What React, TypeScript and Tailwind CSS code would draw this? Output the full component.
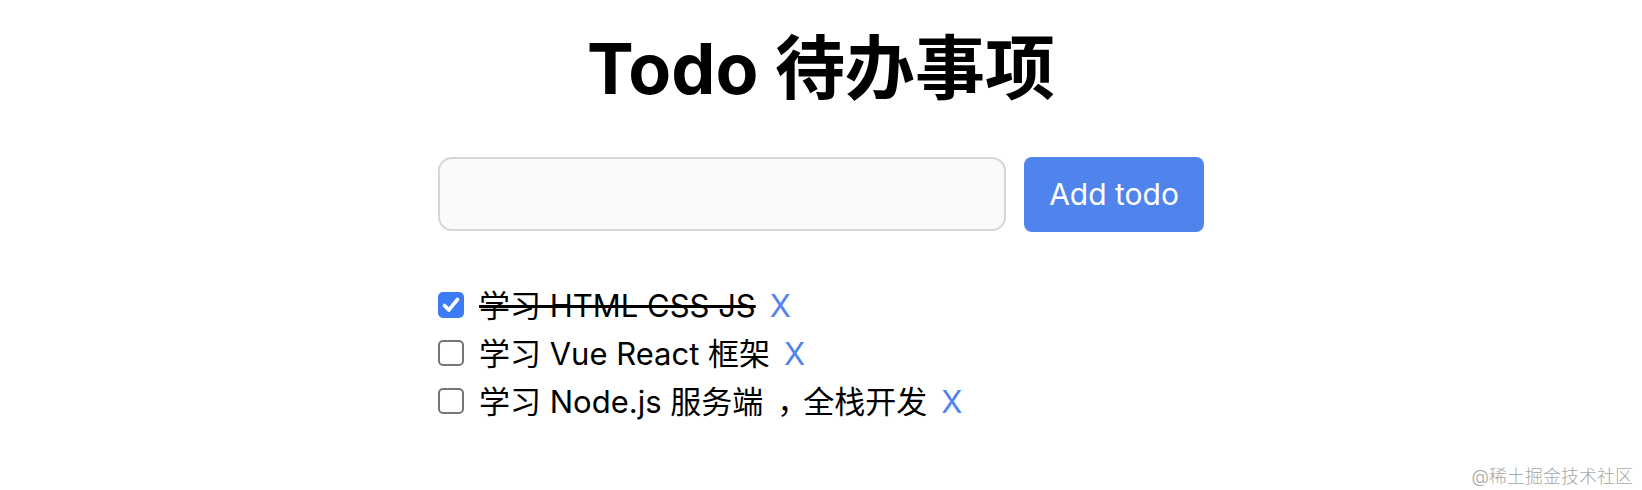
import { useState } from "react";

type Todo = {
  id: number;
  title: string;
  done: boolean;
};

const initialTodos: Todo[] = [
  { id: 1, title: "学习 HTML CSS JS", done: true },
  { id: 2, title: "学习 Vue React 框架", done: false },
  { id: 3, title: "学习 Node.js 服务端，全栈开发", done: false },
];

// the full-width comma has a little room before it in the reference
function Title({ text }: { text: string }) {
  const parts = text.split("，");
  return (
    <>
      {parts.map((p, i) => (
        <span key={i}>
          {i > 0 && <span className="ml-[14px] tracking-[-5px]">，</span>}
          {p}
        </span>
      ))}
    </>
  );
}

function TodoItem({
  todo,
  onToggle,
  onRemove,
}: {
  todo: Todo;
  onToggle: () => void;
  onRemove: () => void;
}) {
  return (
    <li className="flex h-[48px] items-center text-[31px] leading-none text-black">
      <label className="relative flex h-[26px] w-[26px] shrink-0">
        <input
          type="checkbox"
          checked={todo.done}
          onChange={onToggle}
          className="peer m-0 h-[26px] w-[26px] cursor-pointer appearance-none rounded-[5px] border-2 border-[#767676] bg-white checked:border-[#3b7cf5] checked:bg-[#3b7cf5]"
        />
        <svg
          viewBox="0 0 26 26"
          className="pointer-events-none absolute inset-0 hidden h-[26px] w-[26px] peer-checked:block"
          fill="none"
          stroke="white"
          strokeWidth={3.6}
          strokeLinecap="round"
          strokeLinejoin="round"
        >
          <path d="M6.5 13.5l4.3 4.6L19.5 7.5" />
        </svg>
      </label>
      <span className={todo.done ? "ml-[15px] line-through" : "ml-[15px]"}>
        <Title text={todo.title} />
      </span>
      <button
        type="button"
        onClick={onRemove}
        className="ml-[14px] cursor-pointer text-[#4f84ec]"
      >
        X
      </button>
    </li>
  );
}

export default function App() {
  const [todos, setTodos] = useState<Todo[]>(initialTodos);
  const [text, setText] = useState("");

  const addTodo = (e: React.FormEvent) => {
    e.preventDefault();
    if (!text.trim()) return;
    setTodos([...todos, { id: Date.now(), title: text.trim(), done: false }]);
    setText("");
  };

  return (
    <div className="relative h-[490px] w-full overflow-hidden bg-white font-['Inter','Noto_Sans_CJK_SC',sans-serif]">
      <div className="mx-auto w-[766px] pt-[34px]">
        <h1 className="text-center text-[70px] font-bold leading-none text-black">
          Todo 待办事项
        </h1>

        <form onSubmit={addTodo} className="mt-[53px] flex items-start gap-[18px]">
          <input
            value={text}
            onChange={(e) => setText(e.target.value)}
            className="h-[74px] min-w-0 flex-1 rounded-[14px] border-2 border-[#d6d6d6] bg-[#f9fafc] px-4 text-[30px] outline-none"
          />
          <button
            type="submit"
            className="h-[75px] w-[180px] cursor-pointer rounded-[8px] bg-[#4f84ec] text-[30px] text-white"
          >
            Add todo
          </button>
        </form>

        <ul className="mt-[49px]">
          {todos.map((todo) => (
            <TodoItem
              key={todo.id}
              todo={todo}
              onToggle={() =>
                setTodos(
                  todos.map((t) => (t.id === todo.id ? { ...t, done: !t.done } : t))
                )
              }
              onRemove={() => setTodos(todos.filter((t) => t.id !== todo.id))}
            />
          ))}
        </ul>
      </div>

      <div className="absolute bottom-[4px] right-[9px] text-[18px] font-light leading-none text-[#a8a8a8]">
        @稀土掘金技术社区
      </div>
    </div>
  );
}
